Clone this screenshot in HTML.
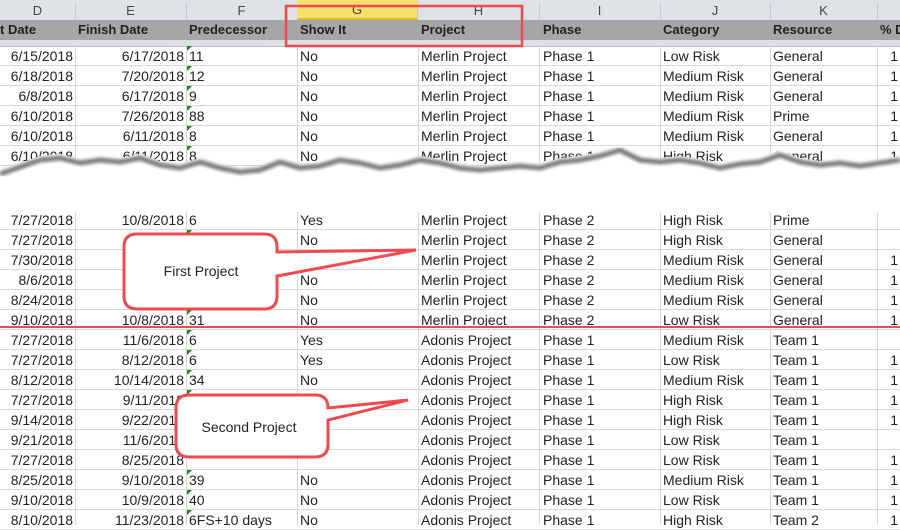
<!DOCTYPE html><html><head><meta charset="utf-8"><style>
body{margin:0;width:900px;height:525px;overflow:hidden;background:#fff;font-family:"Liberation Sans",sans-serif;font-size:14px;color:#222;position:relative}
.hl{position:absolute;top:0;left:0;width:900px;height:20px;background:#dfe3e8;border-bottom:1px solid #c6c9cf;font-size:13px}
.hl span{position:absolute;top:3px;text-align:center;color:#444;border-right:1px solid #c6c9cf;height:17px}
.hh{position:absolute;top:20px;left:0;width:900px;height:20px;background:#a6a6a6;font-weight:bold;font-size:13px}
.band{position:absolute;top:40px;left:0;width:900px;height:6px;background:#dcdfe6;border-bottom:1px solid #bbb}
.r{position:absolute;left:0;width:900px;height:20px;border-bottom:1px solid #d8d8d8;box-sizing:border-box}
.r span,.hh span{position:absolute;top:2px;white-space:nowrap}
.c1{right:827px}.c2{right:716px}.c3{left:189px}.c4{left:300px}.c5{left:421px}.c6{left:543px}.c7{left:663px}.c8{left:773px}.c9{right:2px}
.g{position:absolute;top:46px;width:1px;height:479px;background:#d8d8d8}
.tri{position:absolute;left:187px;top:0;width:0;height:0;border-top:5px solid #1a8a1a;border-right:5px solid transparent}
</style></head><body>
<div class="hl"><span style="left:0;width:75px">D</span><span style="left:75px;width:111px">E</span><span style="left:186px;width:111px">F</span><span style="left:297px;width:121px;background:#f7e06a;top:0;height:20px;line-height:20px;border-bottom:2px solid #e3b730;box-sizing:border-box">G</span><span style="left:418px;width:121px">H</span><span style="left:539px;width:121px">I</span><span style="left:660px;width:110px">J</span><span style="left:770px;width:107px">K</span></div>
<div class="hh"><span style="left:0">t Date</span><span style="left:78px">Finish Date</span><span class="c3">Predecessor</span><span class="c4">Show It</span><span class="c5">Project</span><span class="c6">Phase</span><span class="c7">Category</span><span class="c8">Resource</span><span style="left:880px">% D</span></div>
<div class="band"></div>
<div class="g" style="left:75px"></div><div class="g" style="left:186px"></div><div class="g" style="left:297px"></div><div class="g" style="left:418px"></div><div class="g" style="left:539px"></div><div class="g" style="left:660px"></div><div class="g" style="left:770px"></div><div class="g" style="left:877px"></div>

<div class="r" style="top:46px"><i class="tri"></i><span class="c1">6/15/2018</span><span class="c2">6/17/2018</span><span class="c3">11</span><span class="c4">No</span><span class="c5">Merlin Project</span><span class="c6">Phase 1</span><span class="c7">Low Risk</span><span class="c8">General</span><span class="c9">1</span></div>
<div class="r" style="top:66px"><i class="tri"></i><span class="c1">6/18/2018</span><span class="c2">7/20/2018</span><span class="c3">12</span><span class="c4">No</span><span class="c5">Merlin Project</span><span class="c6">Phase 1</span><span class="c7">Medium Risk</span><span class="c8">General</span><span class="c9">1</span></div>
<div class="r" style="top:86px"><i class="tri"></i><span class="c1">6/8/2018</span><span class="c2">6/17/2018</span><span class="c3">9</span><span class="c4">No</span><span class="c5">Merlin Project</span><span class="c6">Phase 1</span><span class="c7">Medium Risk</span><span class="c8">General</span><span class="c9">1</span></div>
<div class="r" style="top:106px"><i class="tri"></i><span class="c1">6/10/2018</span><span class="c2">7/26/2018</span><span class="c3">88</span><span class="c4">No</span><span class="c5">Merlin Project</span><span class="c6">Phase 1</span><span class="c7">Medium Risk</span><span class="c8">Prime</span><span class="c9">1</span></div>
<div class="r" style="top:126px"><i class="tri"></i><span class="c1">6/10/2018</span><span class="c2">6/11/2018</span><span class="c3">8</span><span class="c4">No</span><span class="c5">Merlin Project</span><span class="c6">Phase 1</span><span class="c7">Medium Risk</span><span class="c8">General</span><span class="c9">1</span></div>
<div class="r" style="top:146px"><i class="tri"></i><span class="c1">6/10/2018</span><span class="c2">6/11/2018</span><span class="c3">8</span><span class="c4">No</span><span class="c5">Merlin Project</span><span class="c6">Phase 1</span><span class="c7">High Risk</span><span class="c8">General</span><span class="c9">1</span></div>

<div class="r" style="top:210px"><span class="c1">7/27/2018</span><span class="c2">10/8/2018</span><span class="c3">6</span><span class="c4">Yes</span><span class="c5">Merlin Project</span><span class="c6">Phase 2</span><span class="c7">High Risk</span><span class="c8">Prime</span></div>
<div class="r" style="top:230px"><i class="tri"></i><span class="c1">7/27/2018</span><span class="c4">No</span><span class="c5">Merlin Project</span><span class="c6">Phase 2</span><span class="c7">High Risk</span><span class="c8">General</span></div>
<div class="r" style="top:250px"><span class="c1">7/30/2018</span><span class="c5">Merlin Project</span><span class="c6">Phase 2</span><span class="c7">Medium Risk</span><span class="c8">General</span><span class="c9">1</span></div>
<div class="r" style="top:270px"><span class="c1">8/6/2018</span><span class="c4">No</span><span class="c5">Merlin Project</span><span class="c6">Phase 2</span><span class="c7">Medium Risk</span><span class="c8">General</span><span class="c9">1</span></div>
<div class="r" style="top:290px"><span class="c1">8/24/2018</span><span class="c4">No</span><span class="c5">Merlin Project</span><span class="c6">Phase 2</span><span class="c7">Medium Risk</span><span class="c8">General</span><span class="c9">1</span></div>
<div class="r" style="top:310px"><i class="tri"></i><span class="c1">9/10/2018</span><span class="c2">10/8/2018</span><span class="c3">31</span><span class="c4">No</span><span class="c5">Merlin Project</span><span class="c6">Phase 2</span><span class="c7">Low Risk</span><span class="c8">General</span><span class="c9">1</span></div>
<div class="r" style="top:330px"><i class="tri"></i><span class="c1">7/27/2018</span><span class="c2">11/6/2018</span><span class="c3">6</span><span class="c4">Yes</span><span class="c5">Adonis Project</span><span class="c6">Phase 1</span><span class="c7">Medium Risk</span><span class="c8">Team 1</span></div>
<div class="r" style="top:350px"><i class="tri"></i><span class="c1">7/27/2018</span><span class="c2">8/12/2018</span><span class="c3">6</span><span class="c4">Yes</span><span class="c5">Adonis Project</span><span class="c6">Phase 1</span><span class="c7">Low Risk</span><span class="c8">Team 1</span><span class="c9">1</span></div>
<div class="r" style="top:370px"><i class="tri"></i><span class="c1">8/12/2018</span><span class="c2">10/14/2018</span><span class="c3">34</span><span class="c4">No</span><span class="c5">Adonis Project</span><span class="c6">Phase 1</span><span class="c7">Medium Risk</span><span class="c8">Team 1</span><span class="c9">1</span></div>
<div class="r" style="top:390px"><i class="tri"></i><span class="c1">7/27/2018</span><span class="c2">9/11/2018</span><span class="c4">No</span><span class="c5">Adonis Project</span><span class="c6">Phase 1</span><span class="c7">High Risk</span><span class="c8">Team 1</span><span class="c9">1</span></div>
<div class="r" style="top:410px"><span class="c1">9/14/2018</span><span class="c2">9/22/2018</span><span class="c5">Adonis Project</span><span class="c6">Phase 1</span><span class="c7">High Risk</span><span class="c8">Team 1</span><span class="c9">1</span></div>
<div class="r" style="top:430px"><span class="c1">9/21/2018</span><span class="c2">11/6/2018</span><span class="c5">Adonis Project</span><span class="c6">Phase 1</span><span class="c7">Low Risk</span><span class="c8">Team 1</span></div>
<div class="r" style="top:450px"><span class="c1">7/27/2018</span><span class="c2">8/25/2018</span><span class="c5">Adonis Project</span><span class="c6">Phase 1</span><span class="c7">Low Risk</span><span class="c8">Team 1</span><span class="c9">1</span></div>
<div class="r" style="top:470px"><i class="tri"></i><span class="c1">8/25/2018</span><span class="c2">9/10/2018</span><span class="c3">39</span><span class="c4">No</span><span class="c5">Adonis Project</span><span class="c6">Phase 1</span><span class="c7">Medium Risk</span><span class="c8">Team 1</span><span class="c9">1</span></div>
<div class="r" style="top:490px"><i class="tri"></i><span class="c1">9/10/2018</span><span class="c2">10/9/2018</span><span class="c3">40</span><span class="c4">No</span><span class="c5">Adonis Project</span><span class="c6">Phase 1</span><span class="c7">Low Risk</span><span class="c8">Team 1</span><span class="c9">1</span></div>
<div class="r" style="top:510px"><i class="tri"></i><span class="c1">8/10/2018</span><span class="c2">11/23/2018</span><span class="c3">6FS+10 days</span><span class="c4">No</span><span class="c5">Adonis Project</span><span class="c6">Phase 1</span><span class="c7">High Risk</span><span class="c8">Team 2</span><span class="c9">1</span></div>

<svg style="position:absolute;left:0;top:0" width="900" height="525">
<defs><filter id="b"><feGaussianBlur stdDeviation="1.6"/></filter></defs>
<polygon fill="#fff" points="0,170 20,163 40,156 60,154 80,159 100,156 120,158 140,154 160,161 180,164 200,158 220,164 240,168 260,166 280,158 300,164 320,162 340,156 360,159 380,164 400,161 420,156 440,159 460,164 480,166 500,164 520,162 540,164 560,158 580,156 600,152 620,146 640,156 660,158 680,156 700,159 720,164 740,160 760,158 780,151 800,158 820,161 840,159 860,162 880,159 900,156 900,208 0,208"/>
<polyline filter="url(#b)" fill="none" stroke="#777" stroke-width="5" points="0,174 20,167 40,160 60,158 80,163 100,160 120,162 140,158 160,165 180,168 200,162 220,168 240,172 260,170 280,162 300,168 320,166 340,160 360,163 380,168 400,165 420,160 440,163 460,168 480,170 500,168 520,166 540,168 560,162 580,160 600,156 620,150 640,160 660,162 680,160 700,163 720,168 740,164 760,162 780,155 800,162 820,165 840,163 860,166 880,163 900,160"/>
<polygon fill="#fff" points="0,173 20,166 40,159 60,157 80,162 100,159 120,161 140,157 160,164 180,167 200,161 220,167 240,171 260,169 280,161 300,167 320,165 340,159 360,162 380,167 400,164 420,159 440,162 460,167 480,169 500,167 520,165 540,167 560,161 580,159 600,155 620,149 640,159 660,161 680,159 700,162 720,167 740,163 760,161 780,154 800,161 820,164 840,162 860,165 880,162 900,159 900,206 0,206" transform="translate(0,6)"/>
<rect x="286" y="6" width="236" height="40" fill="none" stroke="#f04a50" stroke-width="2.5"/>
<line x1="0" y1="327" x2="900" y2="327" stroke="#f04a50" stroke-width="2"/>
<path d="M137,234 H264 Q277,234 277,247 V252 L416,250 L277,276 V296 Q277,309 264,309 H137 Q124,309 124,296 V247 Q124,234 137,234 Z" fill="#fff" stroke="#f04a50" stroke-width="3"/>
<text x="201" y="276" text-anchor="middle" font-family="Liberation Sans" font-size="14" fill="#222">First Project</text>
<path d="M189,395 H315 Q328,395 328,408 V408 L408,400 L328,420 V444 Q328,457 315,457 H189 Q176,457 176,444 V408 Q176,395 189,395 Z" fill="#fff" stroke="#f04a50" stroke-width="3"/>
<text x="249" y="432" text-anchor="middle" font-family="Liberation Sans" font-size="14" fill="#222">Second Project</text>
</svg>
</body></html>
